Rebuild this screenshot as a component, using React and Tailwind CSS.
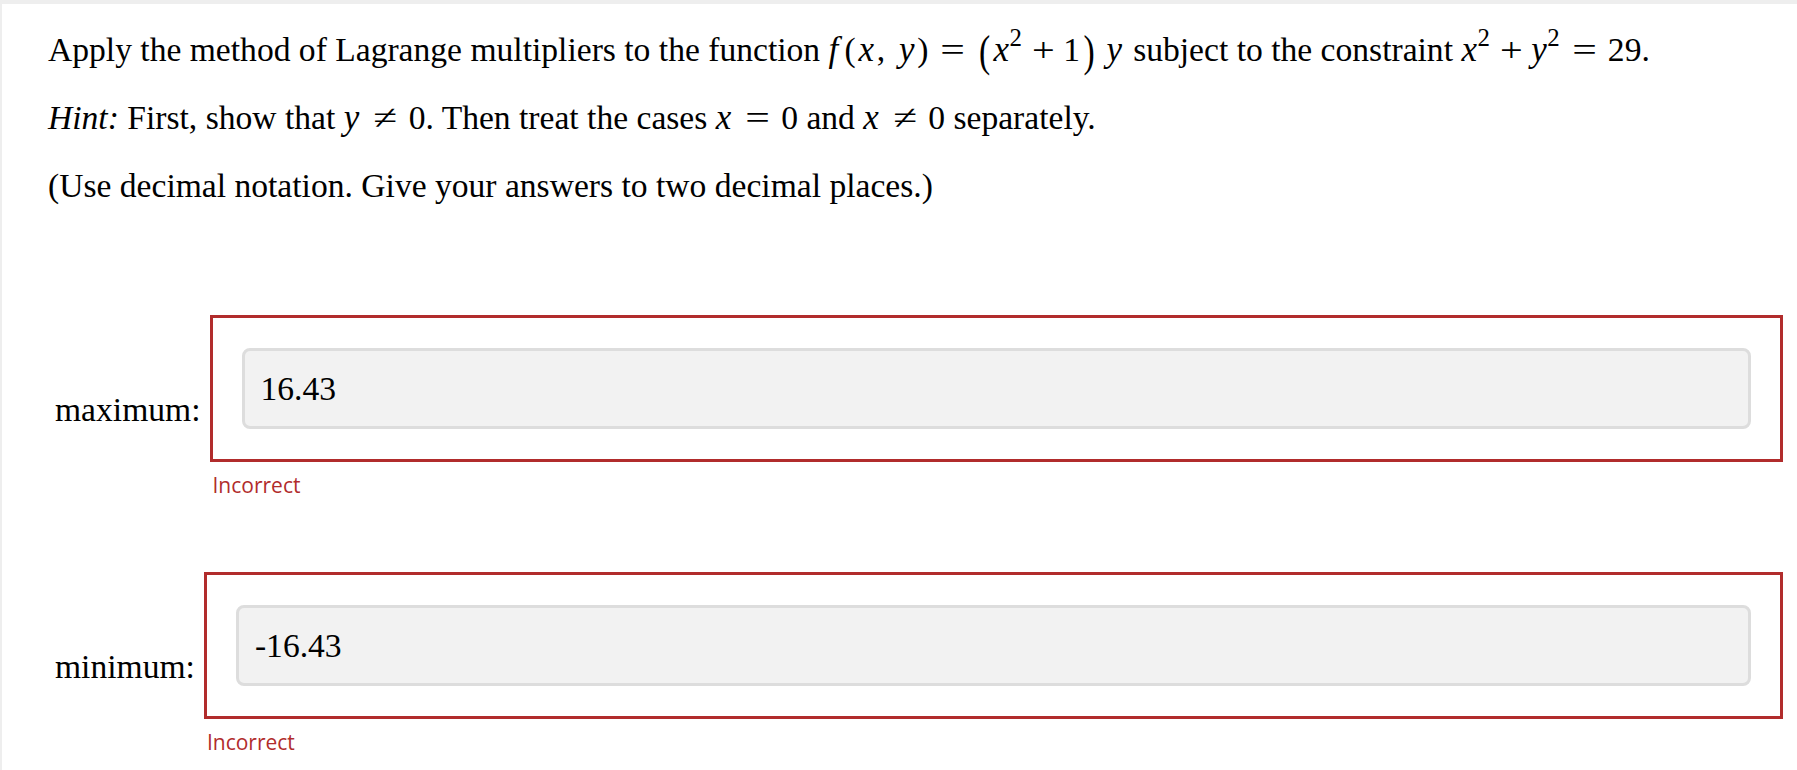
const serif = { fontFamily: '"Liberation Serif", "Times New Roman", serif' };

// math letters come out wider in the original (MathJax), so pad them a little
function V({ children, className = '' }) {
  return <i className={`text-[1.04em] tracking-[0.08em] ${className}`}>{children}</i>;
}

function Rel({ children }) {
  return <span className="inline-block mx-[0.42em] scale-x-[1.3]">{children}</span>;
}

function Bin({ children }) {
  return <span className="inline-block mx-[0.32em] scale-x-[1.2]">{children}</span>;
}

function Sq() {
  return <sup className="text-[0.74em] top-[-0.62em] ml-[0.02em] mr-[0.04em]">2</sup>;
}

function BigParen({ children }) {
  return <span className="inline-block scale-y-[1.32] mx-[0.1em] relative top-[0.02em]">{children}</span>;
}

function AnswerRow({ label, value, className = '' }) {
  return (
    <div className={`flex items-center ${className}`}>
      <div className="pl-[7px] pr-[9px] pt-[6px] text-[33.6px] leading-[38px] text-black" style={serif}>
        {label}
      </div>
      <div className="flex-1 flex flex-col">
        <div className="border-[3px] border-[#b12c2c] px-[29px] py-[30px]">
          <input
            readOnly
            value={value}
            className="w-full h-[81px] rounded-[8px] border-[3px] border-[#dddddd] bg-[#f2f2f2] pl-[16px] text-[33.6px] text-black outline-none"
            style={serif}
          />
        </div>
        <div
          className="mt-[10px] pl-[3px] text-[21px] leading-[27px] text-[#b12c2c]"
          style={{ fontFamily: '"Open Sans", "Noto Sans", sans-serif' }}
        >
          Incorrect
        </div>
      </div>
    </div>
  );
}

export default function App() {
  return (
    <div className="min-h-screen bg-[#eeeeee] pt-[4px] pl-[2px]">
      <div className="bg-white min-h-[766px] pl-[46px] pr-[14px] pt-[27px] text-black" style={serif}>
        <p className="text-[33.6px] leading-[38px] whitespace-nowrap">
          Apply the method of Lagrange multipliers to the function{' '}
          <V className="mr-[0.1em]">f</V>
          <span className="tracking-[0.08em]">(</span>
          <V>x</V>,<span className="mr-[0.16em]"> </span>
          <V>y</V>
          <span>)</span>
          <Rel>=</Rel>
          <BigParen>(</BigParen>
          <V className="tracking-normal">x</V>
          <Sq />
          <Bin>+</Bin>1<BigParen>)</BigParen> <V>y</V> subject to the constraint{' '}
          <V className="tracking-normal">x</V>
          <Sq />
          <Bin>+</Bin>
          <V className="tracking-normal">y</V>
          <Sq />
          <Rel>=</Rel>29.
        </p>
        <p className="mt-[30px] text-[33.6px] leading-[38px] whitespace-nowrap">
          <i>Hint:</i> First, show that <V>y</V>
          <Rel>≠</Rel>0. Then treat the cases <V>x</V>
          <Rel>=</Rel>0 and <V>x</V>
          <Rel>≠</Rel>0 separately.
        </p>
        <p className="mt-[30px] text-[33.6px] leading-[38px] whitespace-nowrap">
          (Use decimal notation. Give your answers to two decimal places.)
        </p>

        <div className="mt-[110px]">
          <AnswerRow label="maximum:" value="16.43" />
          <AnswerRow label="minimum:" value="-16.43" className="mt-[73px]" />
        </div>
      </div>
    </div>
  );
}
